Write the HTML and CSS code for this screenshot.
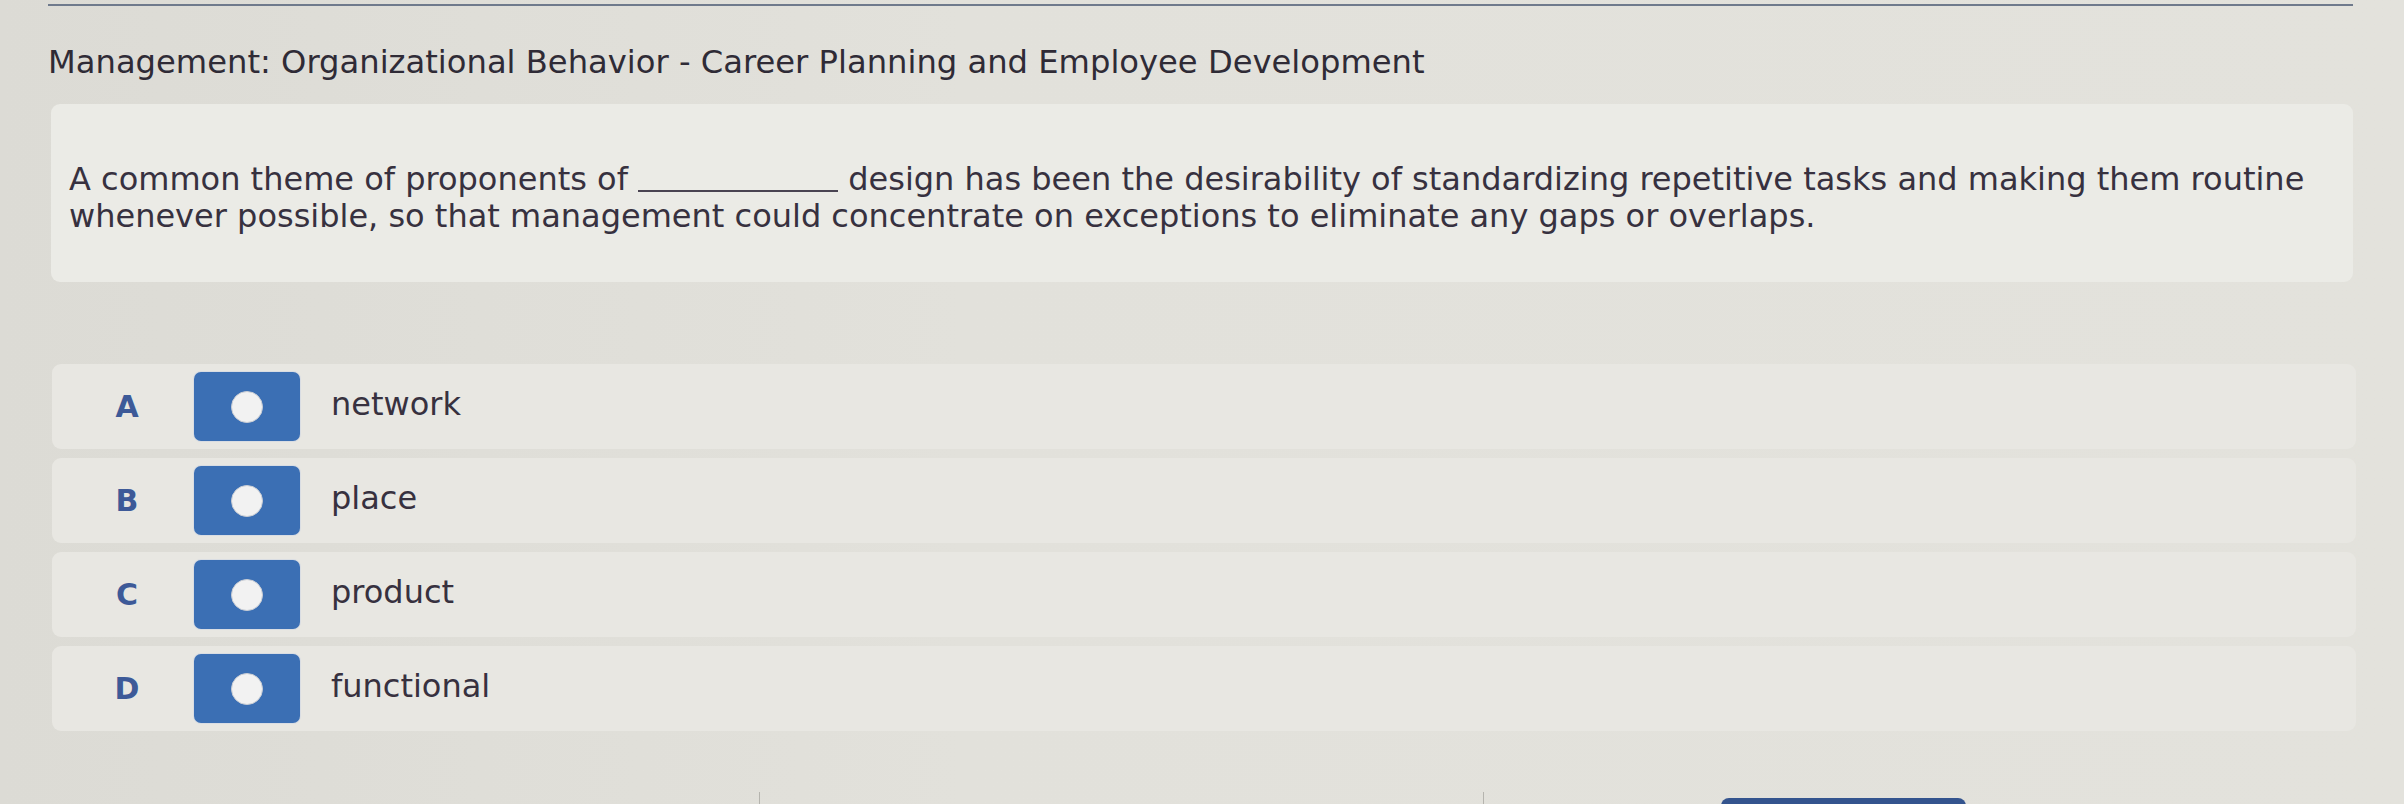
FILE: index.html
```html
<!DOCTYPE html>
<html lang="en">
<head>
<meta charset="utf-8">
<title>Question</title>
<link rel="stylesheet" href="styles.css">
</head>
<body>
<div class="page">
  <div class="topline"></div>
  <h1 class="title">Management: Organizational Behavior - Career Planning and Employee Development</h1>
  <div class="question">
    <p>A common theme of proponents of <span class="blank"></span> design has been the desirability of standardizing repetitive tasks and making them routine whenever possible, so that management could concentrate on exceptions to eliminate any gaps or overlaps.</p>
  </div>
  <div class="options">
    <div class="option"><span class="letter">A</span><span class="radio"><span class="dot"></span></span><span class="label">network</span></div>
    <div class="option"><span class="letter">B</span><span class="radio"><span class="dot"></span></span><span class="label">place</span></div>
    <div class="option"><span class="letter">C</span><span class="radio"><span class="dot"></span></span><span class="label">product</span></div>
    <div class="option"><span class="letter">D</span><span class="radio"><span class="dot"></span></span><span class="label">functional</span></div>
  </div>
  <div class="footer">
    <span class="divider d1"></span>
    <span class="divider d2"></span>
    <span class="next"></span>
  </div>
</div>
</body>
</html>
```
FILE: styles.css
```css
html, body {
  margin: 0;
  padding: 0;
}
body {
  background: linear-gradient(90deg, #dcdbd5 0%, #e2e1db 40%, #e3e2dc 100%);
  font-family: "DejaVu Sans", Verdana, sans-serif;
  color: #35303d;
  height: 804px;
  overflow: hidden;
}
.page {
  padding: 0 48px;
}
.topline {
  margin-top: 4px;
  width: 2305px;
  height: 2px;
  background: #6f7a8c;
}
.title {
  margin: 38px 0 0 0;
  font-size: 32.2px;
  font-weight: normal;
  line-height: 36px;
  color: #2f2b36;
}
.question {
  margin: 24px 0 0 3px;
  width: 2302px;
  height: 178px;
  box-sizing: border-box;
  padding: 57px 20px 0 18px;
  background: #ebebe6;
  border-radius: 9px;
}
.question p {
  margin: 0;
  font-size: 32px;
  line-height: 37px;
  color: #37313f;
}
.blank {
  display: inline-block;
  width: 200px;
  border-bottom: 2px solid #4a4452;
  vertical-align: -2px;
}
.options {
  margin: 82px 0 0 4px;
  width: 2304px;
  display: flex;
  flex-direction: column;
  gap: 9px;
}
.option {
  height: 85px;
  display: grid;
  grid-template-columns: 142px 106px auto;
  align-items: center;
  background: #e8e7e2;
  border-radius: 9px;
}
.letter {
  text-align: center;
  font-weight: bold;
  font-size: 30px;
  color: #3d5a98;
  padding-left: 8px;
}
.radio {
  width: 106px;
  height: 69px;
  background: #3b6fb4;
  border-radius: 7px;
  display: flex;
  align-items: center;
  justify-content: center;
  box-shadow: 0 0 0 1px #d9dde3;
}
.dot {
  width: 30px;
  height: 30px;
  border-radius: 50%;
  background: #f2f2f2;
  border: 1px solid #c9cdd4;
}
.label {
  padding-left: 31px;
  font-size: 32px;
  color: #37313f;
  margin-top: -6px;
}
.footer {
  margin-top: 61px;
  height: 12px;
  display: flex;
  align-items: flex-start;
}
.divider {
  width: 1px;
  height: 12px;
  background: #b5b4ae;
}
.d1 {
  margin-left: 711px;
}
.d2 {
  margin-left: 723px;
}
.next {
  margin: 6px 0 0 237px;
  width: 245px;
  height: 10px;
  background: #34548e;
  border-radius: 8px 8px 0 0;
}
```
